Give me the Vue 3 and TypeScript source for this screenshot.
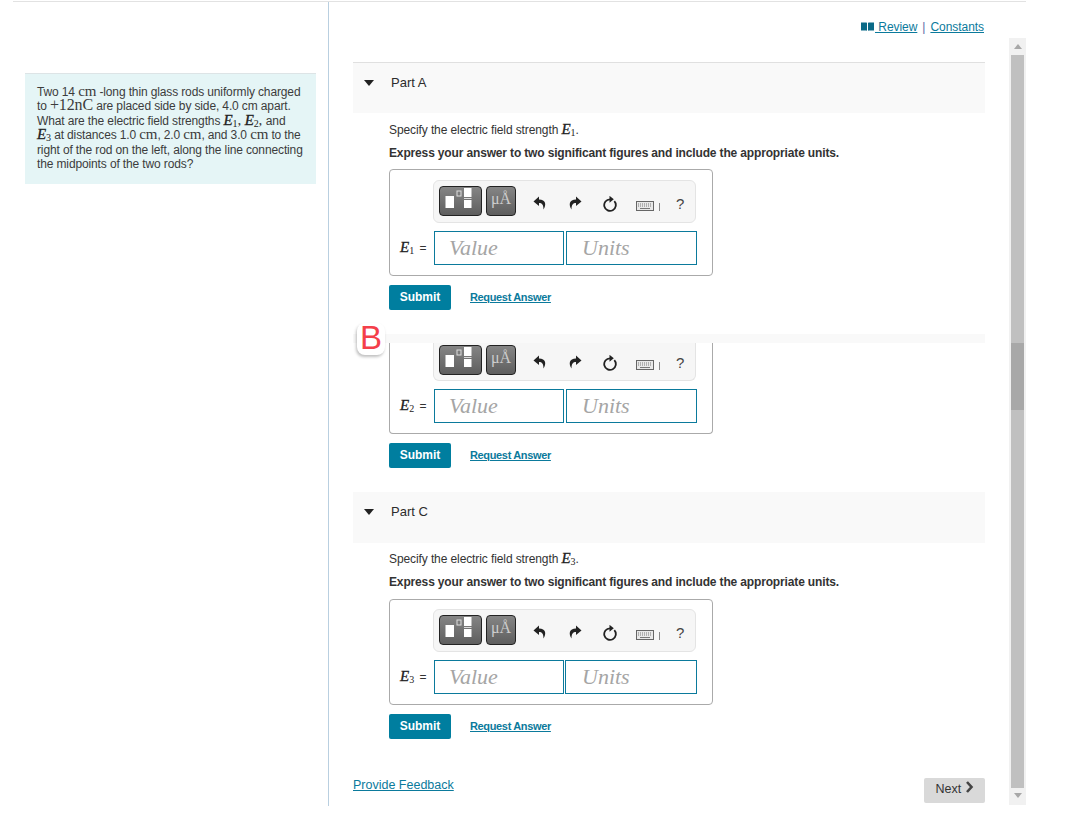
<script setup lang="ts">
interface Part {
  id: string
  sub: string
  cropped: boolean
}

const parts: Part[] = [
  { id: 'A', sub: '1', cropped: false },
  { id: 'B', sub: '2', cropped: true },
  { id: 'C', sub: '3', cropped: false },
]
</script>

<template>
  <div class="page">
    <aside class="left">
      <div class="intro">
        Two 14 <span class="rm">cm</span> -long thin glass rods uniformly charged<br />
        to <span class="rm big">+12nC</span> are placed side by side, 4.0 cm apart.<br />
        What are the electric field strengths <span class="var">E<sub>1</sub></span><span class="rm">, </span><span class="var">E<sub>2</sub></span><span class="rm">, </span>and<br />
        <span class="var">E<sub>3</sub></span> at distances 1.0 <span class="rm">cm</span>, 2.0 <span class="rm">cm</span>, and 3.0 <span class="rm">cm</span> to the<br />
        right of the rod on the left, along the line connecting<br />
        the midpoints of the two rods?
      </div>
    </aside>

    <main class="right">
      <div class="toplinks">
        <svg class="book" width="13" height="9" viewBox="0 0 13 9">
          <path d="M0 0.5h5.5l0.5 0.5v8l-0.5-0.5H0zM13 0.5H7.500L7 1v8l0.500-0.500H13z" fill="#0b6a87" />
        </svg>
        <a class="link">&nbsp;Review</a>
        <span class="pipe">|</span>
        <a class="link">Constants</a>
      </div>

      <section v-for="part in parts" :key="part.id" class="part" :class="'part-' + part.id.toLowerCase()">
        <div v-if="part.cropped" class="strip">
          <span class="marker">B</span>
        </div>
        <template v-else>
          <div class="part-head">
            <span class="caret"></span>
            <span class="part-title">Part {{ part.id }}</span>
          </div>
          <p class="prompt">Specify the electric field strength <span class="var">E<sub>{{ part.sub }}</sub></span>.</p>
          <p class="express">Express your answer to two significant figures and include the appropriate units.</p>
        </template>

        <div class="answer">
          <div class="toolbar">
            <div class="tool tool-wide">
              <svg width="41" height="28" viewBox="0 0 41 28">
                <rect x="5.500" y="9" width="8.500" height="12" fill="#fff" />
                <rect x="17" y="4" width="4" height="5" fill="none" stroke="#ddd" />
                <rect x="24" y="1" width="7.500" height="9" fill="#fff" />
                <rect x="24" y="11" width="7.500" height="1" fill="#ddd" />
                <rect x="24" y="13" width="7.500" height="8" fill="#fff" />
              </svg>
            </div>
            <div class="tool tool-unit">μÅ</div>
            <svg class="ico undo" width="16" height="16" viewBox="0 0 16 16">
              <path d="M7 1.500L1.500 6.500 7 11V8c3 0 4.500 1.500 4.500 6.500C14.500 10 14 4.500 7 4.500z" fill="#222" />
            </svg>
            <svg class="ico redo" width="16" height="16" viewBox="0 0 16 16">
              <path d="M9 1.500l5.500 5L9 11V8c-3 0-4.500 1.500-4.500 6.500C1.500 10 2 4.500 9 4.500z" fill="#222" />
            </svg>
            <svg class="ico reset" width="16" height="16" viewBox="0 0 16 16">
              <path d="M12.300 5.200A5.800 5.800 0 1 1 8 3.300" fill="none" stroke="#222" stroke-width="1.800" />
              <path d="M7.500 -.2v7l4.300-3.500z" fill="#222" />
            </svg>
            <svg class="ico keyboard" width="18" height="10" viewBox="0 0 18 10">
              <rect x=".5" y=".5" width="17" height="9" fill="#e8e8e8" stroke="#666" />
              <path d="M2 3h14M2 5h14" stroke="#777" stroke-dasharray="1 1" />
              <path d="M4 7.500h10" stroke="#777" />
            </svg>
            <span class="sep"></span>
            <span class="help">?</span>
          </div>

          <div class="row">
            <label class="row-label"><span class="var">E<sub>{{ part.sub }}</sub></span> =</label>
            <input class="field field-value" placeholder="Value" />
            <input class="field field-units" placeholder="Units" />
          </div>
        </div>

        <div class="actions">
          <button class="submit">Submit</button>
          <a class="link request">Request Answer</a>
        </div>
      </section>

      <footer class="foot">
        <a class="link feedback">Provide Feedback</a>
        <button class="next">Next
          <svg width="9" height="12" viewBox="0 0 9 12"><path d="M2 1l4.500 5L2 11" fill="none" stroke="#444" stroke-width="2.600" /></svg>
        </button>
      </footer>
    </main>

    <div class="scroll">
      <span class="arrow arrow-up"></span>
      <div class="track">
        <div class="thumb"></div>
      </div>
      <span class="arrow arrow-down"></span>
    </div>
  </div>
</template>

<style>
html,
body {
  background: #fff;
}
</style>

<style scoped>
.page {
  display: flex;
  width: 1013px;
  height: 804px;
  margin: 1px 0 0 13px;
  border-top: 1px solid #e2e2e2;
  font-family: "Liberation Sans", Arial, sans-serif;
  font-size: 12px;
  color: #333;
}

.left {
  flex: none;
  width: 291px;
  padding: 71px 12px 0;
  border-right: 1px solid #b9cfe0;
}

.intro {
  padding: 11px 0 13px 12px;
  height: 111px;
  box-sizing: border-box;
  border-top: 1px solid #dde4e6;
  background: #e5f5f6;
  line-height: 14.400px;
  letter-spacing: -0.13px;
  white-space: nowrap;
  color: #3c3c3c;
}

.rm {
  font-family: "Liberation Serif", "Times New Roman", serif;
  font-size: 15px;
  line-height: 0;
}

.big {
  font-size: 16px;
}

.var {
  font-family: "Liberation Serif", "Times New Roman", serif;
  font-style: italic;
  font-size: 15px;
  line-height: 0;
  color: #222;
  -webkit-text-stroke: 0.3px #222;
}

.var sub {
  font-size: 10px;
  font-style: normal;
  line-height: 0;
  vertical-align: -2px;
  -webkit-text-stroke: 0;
}

.right {
  width: 632px;
  flex: none;
  margin: 0 24px;
}

.toplinks {
  height: 60px;
  padding: 17px 1px 0 0;
  box-sizing: border-box;
  display: flex;
  justify-content: flex-end;
  align-items: baseline;
  line-height: 16px;
  letter-spacing: -0.05px;
}

.book {
  margin-right: 1px;
}

.pipe {
  margin: 0 5px;
  color: #5a6aa5;
}

.link {
  color: #0b7a9c;
  text-decoration: underline;
  cursor: pointer;
}

.part {
  position: relative;
  margin-bottom: 24px;
}

.part-head {
  height: 51px;
  box-sizing: border-box;
  padding: 12px 0 0 11px;
  background: #f9f9f9;
  display: flex;
  align-items: flex-start;
}

.part-a .part-head {
  border-top: 1px solid #e0e0e0;
}

.caret {
  width: 0;
  height: 0;
  margin-top: 5px;
  border-left: 5px solid transparent;
  border-right: 5px solid transparent;
  border-top: 6px solid #222;
}

.part-title {
  margin-left: 17px;
  font-size: 13px;
  line-height: 16px;
  color: #2c2c2c;
}

.prompt,
.express {
  margin: 0 0 0 36px;
  line-height: 14px;
}

.prompt {
  margin-top: 10px;
  letter-spacing: -0.1px;
}

.express {
  margin-top: 9px;
  font-weight: bold;
  font-size: 12px;
  letter-spacing: -0.15px;
}

.part-c .prompt {
  margin-top: 9px;
}

.part-c .answer {
  margin-top: 10px;
}

.answer {
  width: 324px;
  margin: 9px 0 0 36px;
  padding: 10px 0;
  box-sizing: border-box;
  border: 1px solid #aaa;
  border-radius: 4px;
}

.strip {
  height: 9px;
  background: #f9f9f9;
  position: relative;
}

.marker {
  position: absolute;
  left: 4px;
  top: -11px;
  z-index: 2;
  width: 28px;
  height: 32px;
  border-radius: 8px;
  background: #fff;
  box-shadow: -1px 2px 3px rgba(0, 0, 0, 0.25);
  text-align: center;
  font-size: 33px;
  line-height: 30px;
  color: #f43f4a;
}

.part-b .answer {
  margin-top: 0;
  padding-top: 0;
  border-top: none;
  border-top-left-radius: 0;
  border-top-right-radius: 0;
}

.toolbar {
  width: 263px;
  height: 43px;
  margin-left: 43px;
  padding: 5px 0 0 5px;
  box-sizing: border-box;
  display: flex;
  align-items: flex-start;
  background: #f6f6f6;
  border: 1px solid #e4e4e4;
  border-radius: 6px;
}

.part-c .toolbar {
  margin-top: -1px;
}

.part-b .toolbar {
  height: 38px;
  padding-top: 2px;
  border-top: none;
  border-top-left-radius: 0;
  border-top-right-radius: 0;
}

.tool {
  height: 30px;
  box-sizing: border-box;
  border: 1px solid #222;
  border-radius: 4px;
  background: linear-gradient(#858585, #5e5e5e);
  display: flex;
  align-items: center;
  justify-content: center;
}

.tool-wide {
  width: 43px;
}

.tool-unit {
  width: 30px;
  margin-left: 4px;
  font-family: "Liberation Serif", serif;
  font-size: 16px;
  color: #ccc;
  padding-bottom: 5px;
}

.ico {
  flex: none;
  margin-top: 9px;
}

.undo {
  margin-left: 16px;
}

.redo,
.reset {
  margin-left: 19px;
}

.reset {
  margin-top: 10px;
}

.keyboard {
  margin: 15px 0 0 18px;
}

.sep {
  width: 1px;
  height: 8px;
  margin: 17px 0 0 5px;
  background: #888;
}

.help {
  margin: 9px 0 0 16px;
  font-size: 15px;
  line-height: 17px;
  color: #444;
}

.row {
  display: flex;
  align-items: center;
  margin-top: 8px;
  padding-left: 10px;
}

.row-label {
  width: 34px;
  flex: none;
  font-size: 12px;
  word-spacing: 2px;
  color: #333;
}

.field {
  height: 34px;
  box-sizing: border-box;
  border: 1px solid #0b7a9c;
  border-radius: 0;
  outline: none;
  font-family: "Liberation Serif", "Times New Roman", serif;
  font-style: italic;
  font-size: 22px;
  background: #fff;
}

.field::placeholder {
  color: #a5a5a5;
  opacity: 1;
}

.field-value {
  width: 130px;
  padding: 0 0 0 14px;
}

.field-units {
  width: 131px;
  margin-left: 2px;
  padding: 0 0 0 15px;
}

.part-c .field-units {
  width: 132px;
  margin-left: 1px;
  padding-left: 16px;
}

.actions {
  display: flex;
  align-items: center;
  margin: 9px 0 0 36px;
}

.submit {
  width: 62px;
  height: 25px;
  padding: 0 0 2px;
  border: none;
  border-radius: 2px;
  background: #007e9f;
  color: #fff;
  font-family: inherit;
  font-size: 12px;
  font-weight: bold;
}

.request {
  margin: -2px 0 0 19px;
  font-size: 11px;
  font-weight: bold;
  letter-spacing: -0.35px;
}

.part-c {
  margin-bottom: 39px;
}

.foot {
  display: flex;
  justify-content: space-between;
  align-items: flex-start;
}

.feedback {
  font-size: 12.500px;
  line-height: 14px;
}

.next {
  width: 61px;
  height: 25px;
  padding: 0 0 4px;
  border: none;
  border-radius: 2px;
  background: #d9d9d9;
  color: #333;
  font-family: inherit;
  font-size: 12.500px;
}

.scroll {
  width: 17px;
  flex: none;
  margin-top: 36px;
  height: 767px;
  background: #f1f1f1;
  display: flex;
  flex-direction: column;
  align-items: center;
}

.arrow {
  width: 0;
  height: 0;
  flex: none;
  border-left: 4px solid transparent;
  border-right: 4px solid transparent;
}

.arrow-up {
  margin: 6px 0;
  border-bottom: 5px solid #a8a8a8;
}

.arrow-down {
  margin: 5px 0 7px;
  border-top: 5px solid #a8a8a8;
}

.track {
  width: 13px;
  flex: 1;
  background: #c0c0c0;
  padding-top: 288px;
  box-sizing: border-box;
}

.thumb {
  height: 67px;
  background: #a8a8a8;
}
</style>
